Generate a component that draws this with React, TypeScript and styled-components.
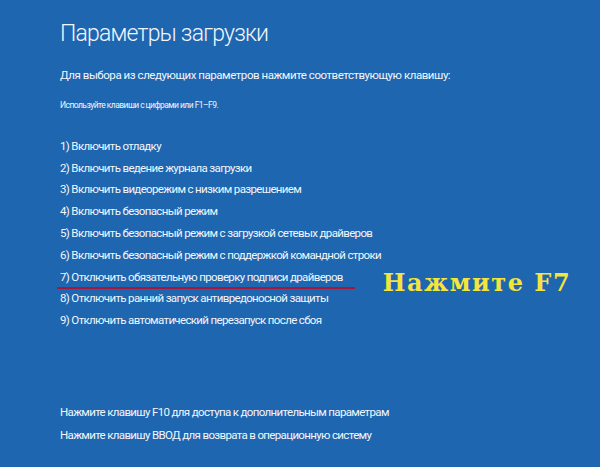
import React from 'react'
import styled, { createGlobalStyle } from 'styled-components'

const GlobalStyle = createGlobalStyle`
  html, body {
    margin: 0;
    padding: 0;
    background: #1f66b0;
  }
`;

const Screen = styled.div`
  width: 600px;
  height: 467px;
  box-sizing: border-box;
  background: #1f66b0;
  color: #f2f6fb;
  font-family: Roboto, "Open Sans", sans-serif;
  padding: 17px 0 0 60px;
  display: flex;
  flex-direction: column;
  overflow: hidden;
`;

const Title = styled.h1`
  margin: 0;
  font-size: 23px;
  font-weight: 300;
  line-height: 34px;
  letter-spacing: -0.8px;
`;

const Lead = styled.p`
  margin: 16px 0 0;
  font-size: 11.5px;
  line-height: 16px;
  letter-spacing: -0.45px;
`;

const Hint = styled.p`
  margin: 16px 0 0;
  font-size: 8.5px;
  line-height: 12px;
  letter-spacing: -0.55px;
`;

const Options = styled.div`
  margin-top: 24px;
  display: flex;
  flex-direction: column;
`;

const Row = styled.div`
  height: 21.75px;
  display: flex;
  align-items: center;
`;

const Item = styled.span<{ $marked?: boolean }>`
  font-size: 11.5px;
  line-height: 16px;
  letter-spacing: -0.65px;
  white-space: nowrap;
  ${({ $marked }) =>
    $marked &&
    `
    margin-left: -3px;
    padding: 0 12px 2px 3px;
    border-bottom: 2px solid #a8163a;
    margin-bottom: -6px;
  `}
`;

const Callout = styled.span`
  margin: 13px 0 0 28px;
  font-family: "DejaVu Serif", "Liberation Serif", serif;
  font-weight: 700;
  font-size: 24px;
  line-height: 20px;
  color: #f4e53c;
  letter-spacing: 1.5px;
  white-space: nowrap;
`;

const Footer = styled.div`
  margin-top: 70px;
  display: flex;
  flex-direction: column;
`;

const FooterLine = styled.div`
  height: 23px;
  display: flex;
  align-items: center;
  font-size: 11.5px;
  letter-spacing: -0.65px;
`;

const options = [
  '1) Включить отладку',
  '2) Включить ведение журнала загрузки',
  '3) Включить видеорежим с низким разрешением',
  '4) Включить безопасный режим',
  '5) Включить безопасный режим с загрузкой сетевых драйверов',
  '6) Включить безопасный режим с поддержкой командной строки',
  '7) Отключить обязательную проверку подписи драйверов',
  '8) Отключить ранний запуск антивредоносной защиты',
  '9) Отключить автоматический перезапуск после сбоя',
];

const App = () => {
  return (
    <>
      <GlobalStyle />
      <Screen>
        <Title>Параметры загрузки</Title>
        <Lead>Для выбора из следующих параметров нажмите соответствующую клавишу:</Lead>
        <Hint>Используйте клавиши с цифрами или F1–F9.</Hint>
        <Options>
          {options.map((text, i) => (
            <Row key={`opt${i}`}>
              <Item $marked={i === 6}>{text}</Item>
              {i === 6 && <Callout>Нажмите F7</Callout>}
            </Row>
          ))}
        </Options>
        <Footer>
          <FooterLine>Нажмите клавишу F10 для доступа к дополнительным параметрам</FooterLine>
          <FooterLine>Нажмите клавишу ВВОД для возврата в операционную систему</FooterLine>
        </Footer>
      </Screen>
    </>
  );
};

export default App;
